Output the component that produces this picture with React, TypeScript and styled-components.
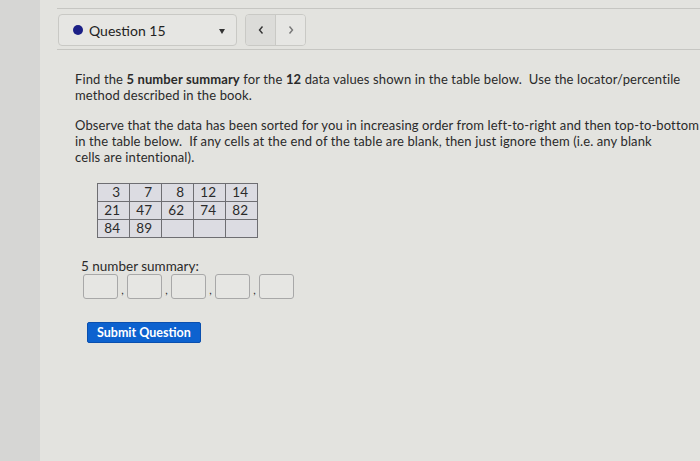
import React from "react";
import styled, { createGlobalStyle } from "styled-components";

const GlobalStyle = createGlobalStyle`
  html, body {
    margin: 0;
    padding: 0;
    background: #e3e3df;
  }
  body {
    font-family: Lato, "Liberation Sans", sans-serif;
    color: #2a2a2a;
  }
`;

const Page = styled.div`
  display: flex;
  width: 700px;
  height: 461px;
  overflow: hidden;
`;

const SideStrip = styled.div`
  width: 40px;
  flex-shrink: 0;
  background: #d6d6d4;
`;

const Main = styled.div`
  flex: 1;
  padding-top: 8px;
  background: #e3e3df;
`;

const Toolbar = styled.div`
  margin-left: 17px;
  display: flex;
  align-items: center;
  gap: 8px;
  padding: 5px 0 3px 1px;
  border-top: 1px solid #c6c6c2;
  border-bottom: 1px solid #c6c6c2;
`;

const QuestionSelect = styled.div`
  width: 179px;
  height: 32px;
  box-sizing: border-box;
  display: flex;
  align-items: center;
  padding: 0 10px 0 14px;
  border: 1px solid #c9c9c5;
  border-radius: 4px;
  background: #e6e6e3;
  font-size: 14px;
  color: #222;
`;

const Dot = styled.span`
  width: 10px;
  height: 10px;
  border-radius: 50%;
  background: #1b1f86;
  margin-right: 6px;
`;

const Caret = styled.span`
  margin-left: auto;
  width: 0;
  height: 0;
  border-left: 3.5px solid transparent;
  border-right: 3.5px solid transparent;
  border-top: 5px solid #333;
  margin-right: 1px;
  margin-top: 2px;
`;

const NavGroup = styled.div`
  display: flex;
  height: 32px;
  box-sizing: border-box;
  border: 1px solid #c9c9c5;
  border-radius: 4px;
  overflow: hidden;
`;

const NavButton = styled.div<{ $pressed?: boolean }>`
  width: 29px;
  display: flex;
  align-items: center;
  justify-content: center;
  background: ${({ $pressed }) => ($pressed ? "#dcdcd9" : "#e6e6e3")};
  border-right: ${({ $pressed }) => ($pressed ? "1px solid #c9c9c5" : "none")};
  color: ${({ $pressed }) => ($pressed ? "#333" : "#777")};
`;

const Content = styled.div`
  padding: 21px 0 0 35px;
  font-size: 13px;
  line-height: 16px;
  letter-spacing: 0.12px;
`;

const Paragraph = styled.p`
  margin: 0 0 14px 0;
  width: 630px;
`;

const DataTable = styled.table`
  border-collapse: collapse;
  margin: 18px 0 0 22px;
  background: #dcdce2;
  font-size: 13.5px;
  letter-spacing: 0;
`;

const Cell = styled.td`
  border: 1px solid #6e6e72;
  width: 32px;
  height: 18px;
  padding: 0 9px 0 0;
  text-align: right;
  box-sizing: border-box;
  line-height: 17px;
`;

const SummaryLabel = styled.div`
  margin: 20px 0 0 6px;
  font-size: 13.5px;
  letter-spacing: 0;
`;

const InputRow = styled.div`
  display: flex;
  align-items: flex-end;
  margin: 0 0 0 8px;
`;

const AnswerBox = styled.div`
  width: 35px;
  height: 25px;
  box-sizing: border-box;
  border: 1.5px solid #a8a8a8;
  border-radius: 3px;
  background: #e6e6e3;
`;

const Comma = styled.span`
  width: 9px;
  text-align: center;
  font-size: 11px;
  line-height: 12px;
  margin-bottom: 3px;
`;

const SubmitButton = styled.button`
  display: block;
  margin: 23px 0 0 12px;
  padding: 0 9px;
  height: 21px;
  border: 1px solid #0a4fae;
  border-radius: 2px;
  background: #0d62cf;
  color: #fff;
  font-family: Lato, "Liberation Sans", sans-serif;
  font-size: 12.5px;
  font-weight: 700;
`;

const rows = [
  ["3", "7", "8", "12", "14"],
  ["21", "47", "62", "74", "82"],
  ["84", "89", "", "", ""],
];

const Chevron: React.FC<{ dir: "left" | "right" }> = ({ dir }) => (
  <svg width="8" height="10" viewBox="0 0 8 10">
    <path
      d={dir === "left" ? "M5.5 1.5 L2.5 5 L5.5 8.5" : "M2.5 1.5 L5.5 5 L2.5 8.5"}
      fill="none"
      stroke="currentColor"
      strokeWidth="1.4"
    />
  </svg>
);

export default function App() {
  return (
    <>
      <GlobalStyle />
      <Page>
        <SideStrip />
        <Main>
          <Toolbar>
            <QuestionSelect>
              <Dot />
              Question 15
              <Caret />
            </QuestionSelect>
            <NavGroup>
              <NavButton $pressed>
                <Chevron dir="left" />
              </NavButton>
              <NavButton>
                <Chevron dir="right" />
              </NavButton>
            </NavGroup>
          </Toolbar>
          <Content>
            <Paragraph>
              Find the <b>5 number summary</b> for the <b>12</b> data values shown in the table below.&nbsp; Use the
              locator/percentile method described in the book.
            </Paragraph>
            <Paragraph>
              Observe that the data has been sorted for you in increasing order from left-to-right and then
              top-to-bottom in the table below.&nbsp; If any cells at the end of the table are blank, then just ignore
              them (i.e. any blank
              <br />
              cells are intentional).
            </Paragraph>
            <DataTable>
              <tbody>
                {rows.map((r, i) => (
                  <tr key={i}>
                    {r.map((v, j) => (
                      <Cell key={j}>{v}</Cell>
                    ))}
                  </tr>
                ))}
              </tbody>
            </DataTable>
            <SummaryLabel>5 number summary:</SummaryLabel>
            <InputRow>
              {[0, 1, 2, 3, 4].map((i) => (
                <React.Fragment key={i}>
                  {i > 0 && <Comma>,</Comma>}
                  <AnswerBox />
                </React.Fragment>
              ))}
            </InputRow>
            <SubmitButton>Submit Question</SubmitButton>
          </Content>
        </Main>
      </Page>
    </>
  );
}
